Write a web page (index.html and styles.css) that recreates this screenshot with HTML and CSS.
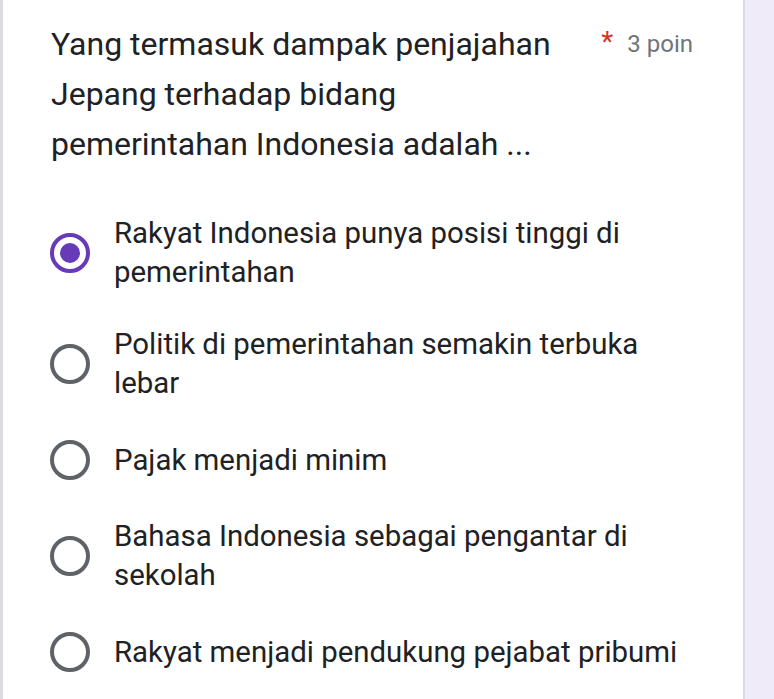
FILE: index.html
```html
<!DOCTYPE html>
<html lang="id">
<head>
<meta charset="utf-8">
<title>Pertanyaan</title>
<link rel="stylesheet" href="styles.css">
</head>
<body>
<div class="page">
  <div class="card">
    <div class="header">
      <div class="title">Yang termasuk dampak penjajahan Jepang terhadap bidang pemerintahan Indonesia adalah ...</div>
      <div class="meta"><span class="req">*</span><span class="points">3 poin</span></div>
    </div>
    <div class="options">
      <div class="option">
        <span class="radio checked"><span class="dot"></span></span>
        <span class="label">Rakyat Indonesia punya posisi tinggi di pemerintahan</span>
      </div>
      <div class="option">
        <span class="radio"></span>
        <span class="label">Politik di pemerintahan semakin terbuka lebar</span>
      </div>
      <div class="option">
        <span class="radio"></span>
        <span class="label">Pajak menjadi minim</span>
      </div>
      <div class="option">
        <span class="radio"></span>
        <span class="label">Bahasa Indonesia sebagai pengantar di sekolah</span>
      </div>
      <div class="option">
        <span class="radio"></span>
        <span class="label">Rakyat menjadi pendukung pejabat pribumi</span>
      </div>
    </div>
  </div>
</div>
</body>
</html>
```

FILE: styles.css
```css
html, body {
  margin: 0;
  padding: 0;
}
body {
  background: #f0ebf8;
  font-family: Roboto, "Liberation Sans", sans-serif;
  color: #202124;
}
.page {
  width: 774px;
  height: 699px;
  overflow: hidden;
}
.card {
  box-sizing: border-box;
  width: 745px;
  height: 699px;
  background: #ffffff;
  border-left: 3px solid #dadce0;
  border-right: 2px solid #dadce0;
  padding: 19px 50px 0 46px;
}
.header {
  display: flex;
  align-items: flex-start;
}
.title {
  width: 523px;
  padding-left: 2px;
  font-size: 32px;
  line-height: 50px;
  color: #202124;
}
.meta {
  display: flex;
  align-items: flex-start;
  margin-left: auto;
  padding-top: 9px;
}
.req {
  color: #d93025;
  font-size: 28px;
  line-height: 28px;
  margin-right: 14px;
}
.points {
  color: #70757a;
  font-size: 24px;
  line-height: 32px;
}
.options {
  display: flex;
  flex-direction: column;
  gap: 33px;
  margin-top: 45px;
}
.option {
  display: flex;
  align-items: center;
  min-height: 48px;
}
.radio {
  box-sizing: border-box;
  flex: none;
  width: 40px;
  height: 40px;
  border: 4px solid #5f6368;
  border-radius: 50%;
  margin-left: 1px;
  margin-right: 24px;
  display: flex;
  align-items: center;
  justify-content: center;
}
.radio.checked {
  border-color: #673ab7;
}
.dot {
  width: 20px;
  height: 20px;
  border-radius: 50%;
  background: #673ab7;
}
.label {
  font-size: 29.4px;
  line-height: 39px;
  width: 575px;
}
```
